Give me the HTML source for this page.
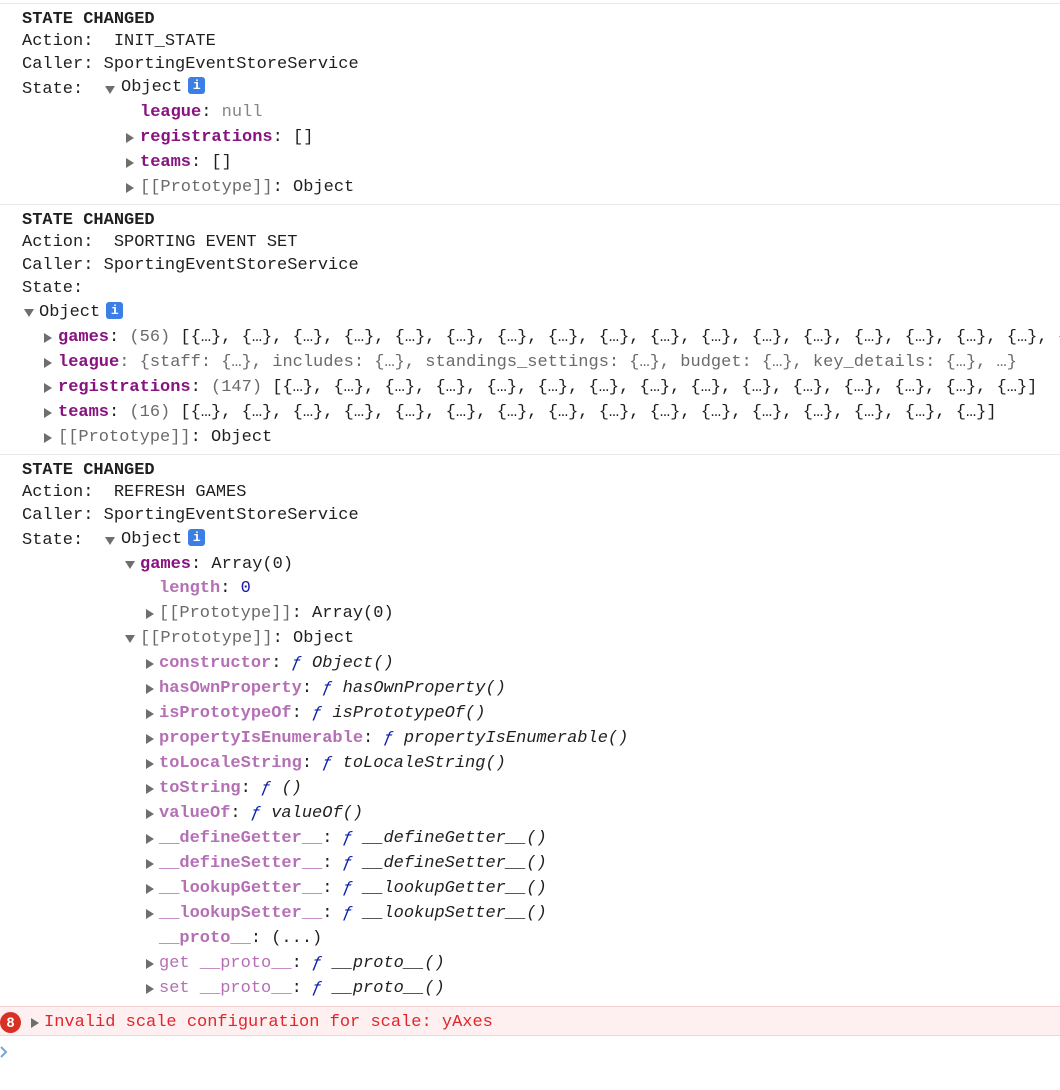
<!DOCTYPE html>
<html><head><meta charset="utf-8"><style>
body{margin:0;width:1060px;height:1090px;background:#fff;position:relative;overflow:hidden;font-family:"Liberation Mono",monospace;font-size:17px;color:#1f1f1f}
.l{position:absolute;white-space:pre;line-height:24px;height:24px}
.sep{position:absolute;left:0;width:1060px;height:1px;background:#e8e8e8}
.b{font-weight:bold}
.k{color:#881280;font-weight:bold}
.fk{color:#b56fb5;font-weight:bold}
.fg{color:#b56fb5}
.g{color:#6a6a6a}
.n{color:#80868b}
.num{color:#1a1aa6}
.fn{font-style:italic}
.f{color:#0d22aa;font-style:italic}
.tr,.td{position:absolute;width:0;height:0}
.tr{border-top:5px solid transparent;border-bottom:5px solid transparent;border-left:8px solid #6e6e6e}
.td{border-left:5px solid transparent;border-right:5px solid transparent;border-top:8px solid #6e6e6e}
.i{display:inline-block;width:17px;height:17px;background:#3b7ee6;color:#fff;border-radius:3px;font-size:13px;line-height:17px;text-align:center;vertical-align:2px;margin-left:6px;font-weight:bold}
</style></head><body>
<div class="sep" style="top:3px"></div>
<div class="l b" style="top:8px;left:22px">STATE CHANGED</div>
<div class="l" style="top:30px;left:22px">Action:  INIT_STATE</div>
<div class="l" style="top:53px;left:22px">Caller: SportingEventStoreService</div>
<div class="l" style="top:78px;left:22px">State:</div>
<div class="td" style="top:86px;left:105px"></div>
<div class="l" style="top:76px;left:121px">Object<span class="i">i</span></div>
<div class="l" style="top:101px;left:140px"><span class="k">league</span>: <span class="n">null</span></div>
<div class="tr" style="top:133px;left:126px"></div>
<div class="l" style="top:126px;left:140px"><span class="k">registrations</span>: []</div>
<div class="tr" style="top:158px;left:126px"></div>
<div class="l" style="top:151px;left:140px"><span class="k">teams</span>: []</div>
<div class="tr" style="top:183px;left:126px"></div>
<div class="l" style="top:176px;left:140px"><span class="g">[[Prototype]]</span>: Object</div>
<div class="sep" style="top:204px"></div>

<div class="l b" style="top:209px;left:22px">STATE CHANGED</div>
<div class="l" style="top:231px;left:22px">Action:  SPORTING EVENT SET</div>
<div class="l" style="top:254px;left:22px">Caller: SportingEventStoreService</div>
<div class="l" style="top:277px;left:22px">State:</div>
<div class="td" style="top:309px;left:24px"></div>
<div class="l" style="top:301px;left:39px">Object<span class="i">i</span></div>
<div class="tr" style="top:333px;left:44px"></div>
<div class="l" style="top:326px;left:58px"><span class="k">games</span>: <span class="g">(56)</span> [{…}, {…}, {…}, {…}, {…}, {…}, {…}, {…}, {…}, {…}, {…}, {…}, {…}, {…}, {…}, {…}, {…}, {…}]</div>
<div class="tr" style="top:358px;left:44px"></div>
<div class="l g" style="top:351px;left:58px"><span class="k">league</span>: {staff: {…}, includes: {…}, standings_settings: {…}, budget: {…}, key_details: {…}, …}</div>
<div class="tr" style="top:383px;left:44px"></div>
<div class="l" style="top:376px;left:58px"><span class="k">registrations</span>: <span class="g">(147)</span> [{…}, {…}, {…}, {…}, {…}, {…}, {…}, {…}, {…}, {…}, {…}, {…}, {…}, {…}, {…}]</div>
<div class="tr" style="top:408px;left:44px"></div>
<div class="l" style="top:401px;left:58px"><span class="k">teams</span>: <span class="g">(16)</span> [{…}, {…}, {…}, {…}, {…}, {…}, {…}, {…}, {…}, {…}, {…}, {…}, {…}, {…}, {…}, {…}]</div>
<div class="tr" style="top:433px;left:44px"></div>
<div class="l" style="top:426px;left:58px"><span class="g">[[Prototype]]</span>: Object</div>
<div class="sep" style="top:454px"></div>

<div class="l b" style="top:459px;left:22px">STATE CHANGED</div>
<div class="l" style="top:481px;left:22px">Action:  REFRESH GAMES</div>
<div class="l" style="top:504px;left:22px">Caller: SportingEventStoreService</div>
<div class="l" style="top:529px;left:22px">State:</div>
<div class="td" style="top:537px;left:105px"></div>
<div class="l" style="top:528px;left:121px">Object<span class="i">i</span></div>
<div class="td" style="top:561px;left:125px"></div>
<div class="l" style="top:553px;left:140px"><span class="k">games</span>: Array(0)</div>
<div class="l" style="top:577px;left:159px"><span class="fk">length</span>: <span class="num">0</span></div>
<div class="tr" style="top:609px;left:146px"></div>
<div class="l" style="top:602px;left:159px"><span class="g">[[Prototype]]</span>: Array(0)</div>
<div class="td" style="top:635px;left:125px"></div>
<div class="l" style="top:627px;left:140px"><span class="g">[[Prototype]]</span>: Object</div>
<div class="tr" style="top:659px;left:146px"></div>
<div class="l" style="top:652px;left:159px"><span class="fk">constructor</span>: <span class="f">ƒ</span> <span class="fn">Object()</span></div>
<div class="tr" style="top:684px;left:146px"></div>
<div class="l" style="top:677px;left:159px"><span class="fk">hasOwnProperty</span>: <span class="f">ƒ</span> <span class="fn">hasOwnProperty()</span></div>
<div class="tr" style="top:709px;left:146px"></div>
<div class="l" style="top:702px;left:159px"><span class="fk">isPrototypeOf</span>: <span class="f">ƒ</span> <span class="fn">isPrototypeOf()</span></div>
<div class="tr" style="top:734px;left:146px"></div>
<div class="l" style="top:727px;left:159px"><span class="fk">propertyIsEnumerable</span>: <span class="f">ƒ</span> <span class="fn">propertyIsEnumerable()</span></div>
<div class="tr" style="top:759px;left:146px"></div>
<div class="l" style="top:752px;left:159px"><span class="fk">toLocaleString</span>: <span class="f">ƒ</span> <span class="fn">toLocaleString()</span></div>
<div class="tr" style="top:784px;left:146px"></div>
<div class="l" style="top:777px;left:159px"><span class="fk">toString</span>: <span class="f">ƒ</span> <span class="fn">()</span></div>
<div class="tr" style="top:809px;left:146px"></div>
<div class="l" style="top:802px;left:159px"><span class="fk">valueOf</span>: <span class="f">ƒ</span> <span class="fn">valueOf()</span></div>
<div class="tr" style="top:834px;left:146px"></div>
<div class="l" style="top:827px;left:159px"><span class="fk">__defineGetter__</span>: <span class="f">ƒ</span> <span class="fn">__defineGetter__()</span></div>
<div class="tr" style="top:859px;left:146px"></div>
<div class="l" style="top:852px;left:159px"><span class="fk">__defineSetter__</span>: <span class="f">ƒ</span> <span class="fn">__defineSetter__()</span></div>
<div class="tr" style="top:884px;left:146px"></div>
<div class="l" style="top:877px;left:159px"><span class="fk">__lookupGetter__</span>: <span class="f">ƒ</span> <span class="fn">__lookupGetter__()</span></div>
<div class="tr" style="top:909px;left:146px"></div>
<div class="l" style="top:902px;left:159px"><span class="fk">__lookupSetter__</span>: <span class="f">ƒ</span> <span class="fn">__lookupSetter__()</span></div>
<div class="l" style="top:927px;left:159px"><span class="fk">__proto__</span>: (...)</div>
<div class="tr" style="top:959px;left:146px"></div>
<div class="l" style="top:952px;left:159px"><span class="fg">get __proto__</span>: <span class="f">ƒ</span> <span class="fn">__proto__()</span></div>
<div class="tr" style="top:984px;left:146px"></div>
<div class="l" style="top:977px;left:159px"><span class="fg">set __proto__</span>: <span class="f">ƒ</span> <span class="fn">__proto__()</span></div>

<div style="position:absolute;top:1006px;left:0;width:1060px;height:30px;background:#fef0f0;border-top:1px solid #f9d0d0;border-bottom:1px solid #f9d0d0;box-sizing:border-box"></div>
<div style="position:absolute;top:1012px;left:0;width:21px;height:21px;border-radius:50%;background:#d93025;color:#fff;font-size:14px;font-weight:bold;line-height:21px;text-align:center;font-family:'Liberation Sans',sans-serif">8</div>
<div class="tr" style="top:1018px;left:31px"></div>
<div class="l" style="top:1011px;left:44px;color:#e0262a">Invalid scale configuration for scale: yAxes</div>
<svg style="position:absolute;top:1045px;left:0" width="10" height="14"><path d="M1 2 L6 7 L1 12" stroke="#7aa3e0" stroke-width="2" fill="none"/></svg>
</body></html>
